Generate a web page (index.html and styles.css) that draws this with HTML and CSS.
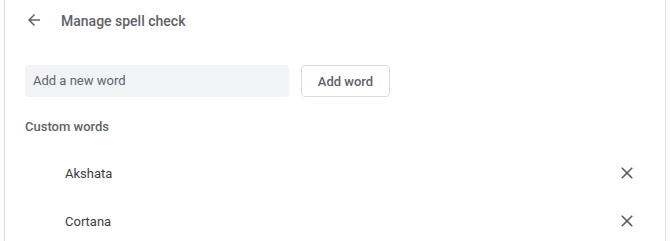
FILE: index.html
```html
<!DOCTYPE html>
<html lang="en">
<head>
<meta charset="utf-8">
<title>Manage spell check</title>
<link rel="stylesheet" href="styles.css">
</head>
<body>
<div class="card">
  <div class="header">
    <button class="icon-btn back" aria-label="Back">
      <svg viewBox="0 0 24 24" width="18" height="18"><path d="M20 11H7.83l5.59-5.59L12 4l-8 8 8 8 1.41-1.41L7.83 13H20v-2z"/></svg>
    </button>
    <h1 class="title">Manage spell check</h1>
  </div>
  <div class="add-row">
    <div class="input">Add a new word</div>
    <button class="add-btn">Add word</button>
  </div>
  <div class="label">Custom words</div>
  <div class="list">
    <div class="item">
      <span class="word">Akshata</span>
      <button class="icon-btn remove" aria-label="Remove">
        <svg viewBox="0 0 24 24" width="20" height="20"><path d="M19 6.41L17.59 5 12 10.59 6.41 5 5 6.41 10.59 12 5 17.59 6.41 19 12 13.41 17.59 19 19 17.59 13.41 12z"/></svg>
      </button>
    </div>
    <div class="item">
      <span class="word">Cortana</span>
      <button class="icon-btn remove" aria-label="Remove">
        <svg viewBox="0 0 24 24" width="20" height="20"><path d="M19 6.41L17.59 5 12 10.59 6.41 5 5 6.41 10.59 12 5 17.59 6.41 19 12 13.41 17.59 19 19 17.59 13.41 12z"/></svg>
      </button>
    </div>
  </div>
</div>
</body>
</html>
```
FILE: styles.css
```css
html, body {
  margin: 0;
  padding: 0;
  background: #ffffff;
}
body {
  font-family: Roboto, "Liberation Sans", Arial, sans-serif;
  font-size: 13px;
  color: #202124;
  height: 241px;
  overflow: hidden;
}
.card {
  margin-left: 5px;
  width: 660px;
  height: 241px;
  overflow: hidden;
  background: #fff;
  box-shadow: 0 0 1px 1px rgba(60, 64, 67, 0.12), 0 0 0 1px rgba(60, 64, 67, 0.06);
  padding: 0 20px;
  box-sizing: border-box;
}
.header {
  height: 40px;
  display: flex;
  align-items: center;
}
.icon-btn {
  background: none;
  border: 0;
  padding: 0;
  display: flex;
  align-items: center;
  justify-content: center;
  fill: #5f6368;
  cursor: pointer;
}
.back {
  width: 18px;
  height: 18px;
}
.title {
  margin: 0 0 0 18px;
  padding-top: 2px;
  font-size: 14px;
  font-weight: 500;
  color: #5f6368;
  line-height: 20px;
}
.add-row {
  margin-top: 25px;
  display: flex;
  gap: 12px;
}
.input {
  width: 264px;
  height: 32px;
  box-sizing: border-box;
  background: #f1f3f4;
  border-radius: 4px;
  padding-left: 8px;
  line-height: 32px;
  color: #5f6368;
}
.add-btn {
  width: 89px;
  height: 32px;
  box-sizing: border-box;
  background: #fff;
  border: 1px solid #dadce0;
  border-radius: 4px;
  font-family: inherit;
  font-size: 13px;
  font-weight: 500;
  color: #5f6368;
  padding: 0;
}
.label {
  margin-top: 20px;
  line-height: 20px;
  font-weight: 500;
  color: #5f6368;
}
.list {
  margin-top: 12px;
}
.item {
  height: 48px;
  display: flex;
  align-items: center;
  padding-left: 40px;
}
.word {
  flex: 1;
  color: #3c4043;
}
.remove {
  width: 36px;
  height: 36px;
}
```
